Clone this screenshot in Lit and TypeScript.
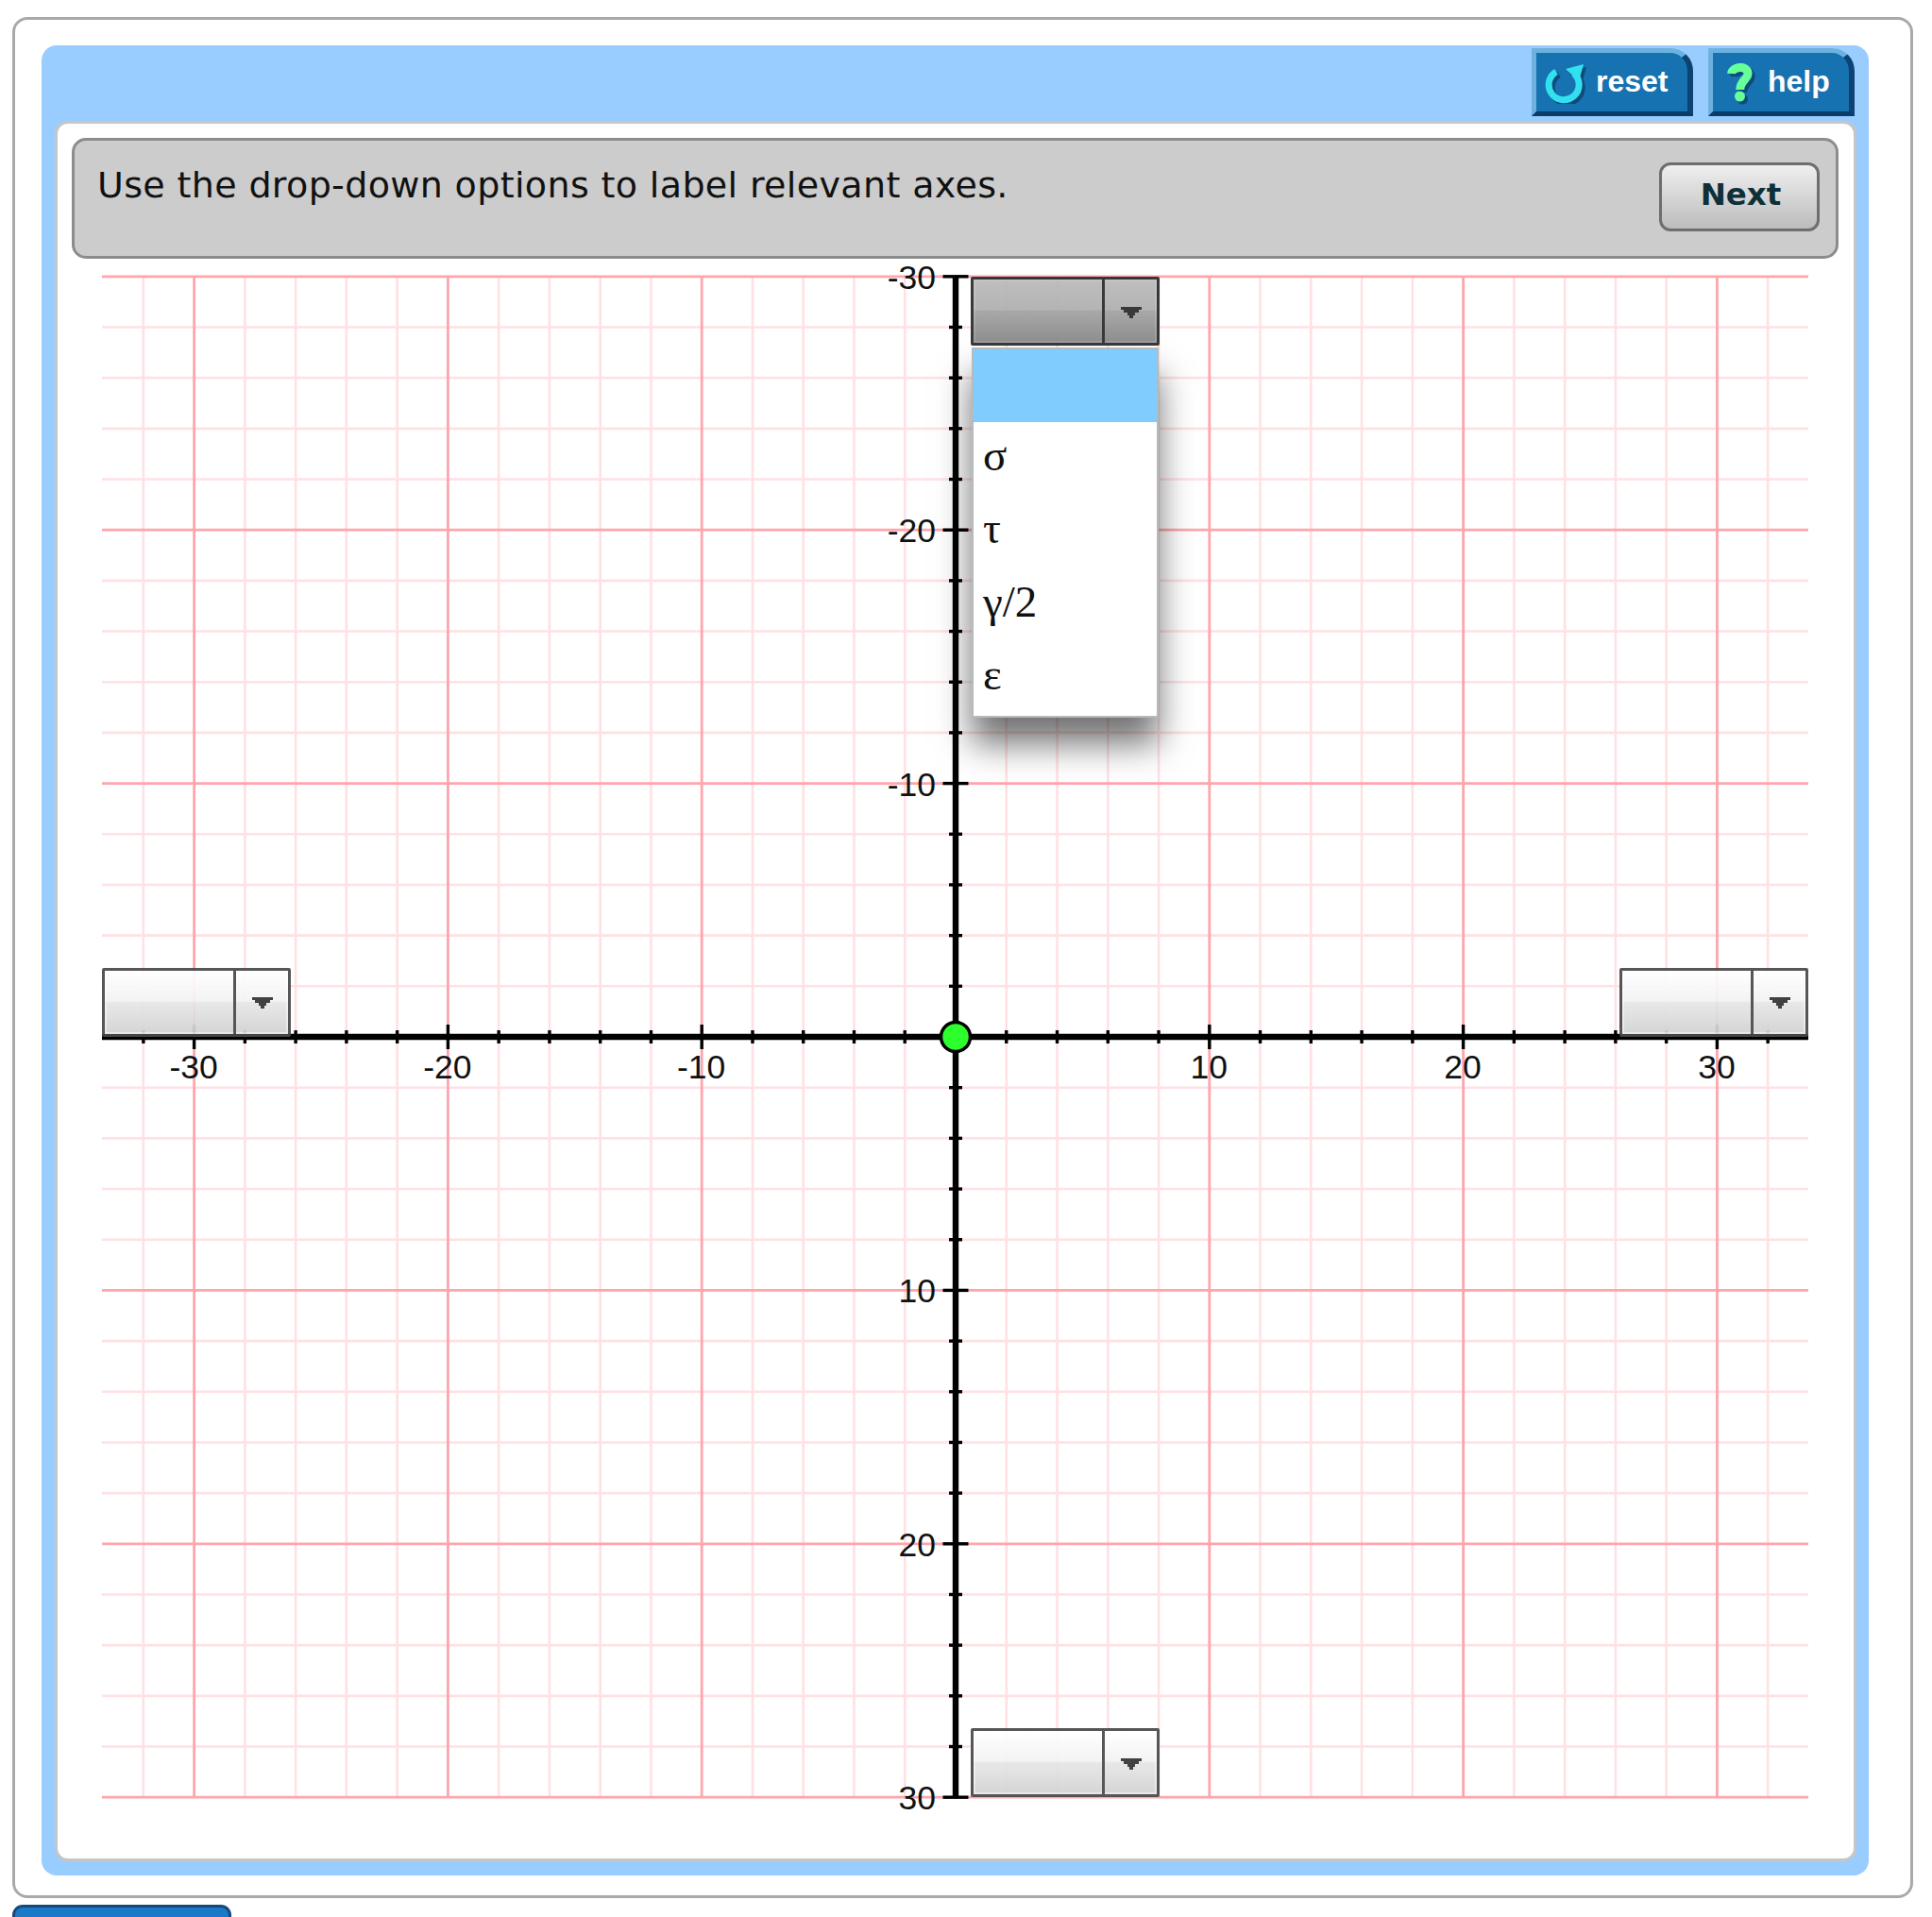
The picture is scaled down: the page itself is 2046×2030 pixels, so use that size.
import { LitElement, html, css, svg } from "lit";
import { customElement } from "lit/decorators.js";

const CX = 1012;
const CY = 1098;
const UX = 26.88;
const UY = 26.84;
const X0 = 108;
const X1 = 1915;
const Y0 = CY - 30 * UY;
const Y1 = CY + 30 * UY;
const OX = 76;
const OY = 274;

const range = (from: number, to: number, step: number) => {
  const out: number[] = [];
  for (let v = from; v <= to; v += step) out.push(v);
  return out;
};

const xs = (v: number) => CX + v * UX;
const ys = (v: number) => CY + v * UY;

type Drop = { x: number; y: number; active?: boolean };
const drops: Drop[] = [
  { x: 108, y: 1024.5 },
  { x: 1715, y: 1024.5 },
  { x: 1028, y: 293, active: true },
  { x: 1028, y: 1830 },
];

const options = ["", "σ", "τ", "γ/2", "ε"];

@customElement("app-root")
export class AppRoot extends LitElement {
  static styles = css`
    :host {
      display: block;
      height: 2030px;
      overflow: hidden;
      padding-top: 18px;
      box-sizing: border-box;
      font-family: "Liberation Sans", Arial, sans-serif;
      background: #fff;
    }
    .frame {
      box-sizing: border-box;
      width: 2013px;
      height: 1991.5px;
      margin-left: 13px;
      border: 3px solid #a9a9a9;
      border-radius: 16px;
      padding: 27px 44px 19px 28px;
      background: #fff;
    }
    .panel {
      background: #99ccff;
      border-radius: 16px;
      padding: 0 13px 15px 14px;
    }
    .toolbar {
      box-sizing: border-box;
      height: 80px;
      padding: 3px 2px 0 0;
      display: flex;
      justify-content: flex-end;
      align-items: flex-start;
      gap: 16px;
    }
    .tool {
      box-sizing: border-box;
      height: 72px;
      display: flex;
      align-items: center;
      background: #1772b1;
      border-style: solid;
      border-width: 5px 6px 5px 5px;
      border-color: #6db2df #0d4272 #0c3c69 #6db2df;
      border-radius: 0 24px 0 0;
      color: #fff;
      font-weight: 700;
      font-size: 32px;
    }
    .tool span {
      margin-top: -2px;
    }
    .tool svg {
      display: block;
      flex: none;
    }
    .reset {
      width: 171px;
      padding-left: 9px;
      gap: 8px;
    }
    .help {
      width: 155px;
      padding-left: 12px;
      gap: 6px;
    }
    .card {
      background: #fff;
      border: 3px solid #c6c6c6;
      border-radius: 14px;
      padding: 14.5px 16px 44px 15px;
    }
    .prompt {
      box-sizing: border-box;
      height: 128.5px;
      background: #cccccc;
      border: 3px solid #8c8c8c;
      border-radius: 15px;
      display: flex;
      justify-content: space-between;
      align-items: flex-start;
      padding: 23px 17px 0 24px;
    }
    .prompt-text {
      font-family: "DejaVu Sans", Verdana, sans-serif;
      font-size: 38px;
      letter-spacing: 0.36px;
      line-height: 44px;
      color: #111;
      margin-top: 2px;
    }
    .next {
      box-sizing: border-box;
      width: 170px;
      height: 73px;
      display: flex;
      align-items: center;
      justify-content: center;
      padding: 0 0 4px 3px;
      border: 3px solid #6e6e6e;
      border-radius: 12px;
      background: linear-gradient(#efefef, #bcbcbc);
      font-family: "DejaVu Sans", Verdana, sans-serif;
      font-weight: 700;
      font-size: 32.5px;
      color: #0e3038;
    }
    .plot {
      position: relative;
      width: 1871px;
      height: 1650px;
    }
    .plot > svg {
      display: block;
    }
    .axis-label {
      font-family: "Liberation Sans", Arial, sans-serif;
      font-size: 35.5px;
      fill: #111;
    }
    .dd {
      position: absolute;
      box-sizing: border-box;
      width: 200px;
      height: 73px;
      display: flex;
      border: 3px solid #4a4a4a;
      border-radius: 2px;
      opacity: 0.93;
      background: linear-gradient(#ffffff 0%, #f3f3f3 48%, #e7e7e7 50%, #d2d2d2 100%);
      box-shadow: inset 0 0 0 2px rgba(255, 255, 255, 0.45);
    }
    .dd.active {
      background: linear-gradient(#bcbcbc 0%, #b2b2b2 48%, #a6a6a6 50%, #8a8a8a 100%);
      border-color: #333;
      box-shadow: inset 0 0 0 2px rgba(255, 255, 255, 0.12);
      z-index: 2;
      opacity: 0.97;
    }
    .dd-field {
      flex: 1;
      border-right: 3px solid #4a4a4a;
    }
    .dd.active .dd-field {
      border-right-color: #333;
    }
    .dd-arrow {
      width: 55px;
      flex: none;
      display: flex;
      align-items: center;
      justify-content: center;
      padding-top: 2px;
      box-sizing: border-box;
    }
    .menu {
      position: absolute;
      left: 953px;
      top: 93.5px;
      box-sizing: border-box;
      width: 198px;
      height: 392.5px;
      background: #fff;
      border: 2.5px solid #b4babd;
      box-shadow: 0 28px 34px rgba(0, 0, 0, 0.55);
      z-index: 1;
    }
    .opt {
      box-sizing: border-box;
      height: 77.4px;
      padding: 0 0 7px 10px;
      display: flex;
      align-items: center;
      font-family: "Liberation Serif", "Times New Roman", serif;
      font-size: 47px;
      color: #111;
    }
    .opt.sel {
      background: #80ccff;
    }
    .tab {
      box-sizing: border-box;
      width: 232px;
      height: 15px;
      margin: 7px 0 0 13px;
      background: #1b7ac7;
      border: 3px solid #15487d;
      border-bottom: none;
      border-radius: 11px 11px 0 0;
    }
  `;

  private grid() {
    const minorX = range(-32, 32, 2).filter((v) => v % 10 !== 0);
    const minorY = range(-30, 30, 2).filter((v) => v % 10 !== 0);
    const majors = range(-30, 30, 10);
    return svg`
      <g stroke="#ffe1e3" stroke-width="2.6">
        ${minorX.map((v) => svg`<line x1=${xs(v)} x2=${xs(v)} y1=${Y0} y2=${Y1} />`)}
        ${minorY.map((v) => svg`<line x1=${X0} x2=${X1} y1=${ys(v)} y2=${ys(v)} />`)}
      </g>
      <g stroke="#ffa5ac" stroke-width="2.8">
        ${majors.map((v) => svg`<line x1=${xs(v)} x2=${xs(v)} y1=${Y0} y2=${Y1} />`)}
        ${majors.map((v) => svg`<line x1=${X0} x2=${X1} y1=${ys(v)} y2=${ys(v)} />`)}
      </g>`;
  }

  private axes() {
    const tx = range(-32, 32, 2).filter((v) => v !== 0);
    const ty = range(-30, 30, 2).filter((v) => v !== 0);
    const labels = range(-30, 30, 10).filter((v) => v !== 0);
    return svg`
      <g stroke="#000" stroke-width="3.4">
        ${tx.map((v) => {
          const m = v % 10 === 0;
          return svg`<line x1=${xs(v)} x2=${xs(v)} y1=${CY - (m ? 13 : 7)} y2=${CY + (m ? 13 : 7)} />`;
        })}
        ${ty.map((v) => {
          const m = v % 10 === 0;
          return svg`<line y1=${ys(v)} y2=${ys(v)} x1=${CX - (m ? 13.5 : 7)} x2=${CX + (m ? 13.5 : 7)} />`;
        })}
      </g>
      <line x1=${X0} x2=${X1} y1=${CY} y2=${CY} stroke="#000" stroke-width="6.4" />
      <line x1=${CX} x2=${CX} y1=${Y0} y2=${Y1} stroke="#000" stroke-width="6.4" />
      <circle cx=${CX} cy=${CY} r="15.5" fill="#2dff2d" stroke="#000" stroke-width="3.5" />
      ${labels.map(
        (v) => svg`<text class="axis-label" x=${xs(v) - 0.5} y="1142" text-anchor="middle">${v}</text>`
      )}
      ${labels.map(
        (v) => svg`<text class="axis-label" x="991" y=${ys(v) + 13} text-anchor="end">${v}</text>`
      )}`;
  }

  private arrow() {
    return html`<svg width="24" height="14" viewBox="0 0 24 14">
      <path
        d="M1 1H23V4H20V7H16V10H14V13H10V10H8V7H4V4H1Z"
        fill="#333"
      />
    </svg>`;
  }

  render() {
    return html`
      <div class="frame">
        <div class="panel">
          <div class="toolbar">
            <div class="tool reset">
              <svg width="46" height="46" viewBox="0 0 46 46">
                <g fill="none" stroke="#0e4a7a" stroke-width="7" transform="translate(3 3)">
                  <path d="M12 12A16 16 0 1 0 31 14" />
                </g>
                <polygon points="25,12 44,7 39,25" fill="#0e4a7a" />
                <path d="M12 12A16 16 0 1 0 31 14" fill="none" stroke="#33e0f0" stroke-width="7" />
                <polygon points="22,9 41,4 36,22" fill="#33e0f0" />
              </svg>
              <span>reset</span>
            </div>
            <div class="tool help">
              <svg width="40" height="50" viewBox="0 0 40 50">
                <g transform="translate(3 3)">
                  <path d="M7.5 16C8 9 23.5 6 25 15C26 22 17 22 16.7 33" fill="none" stroke="#0e4a7a" stroke-width="9" />
                  <circle cx="16.5" cy="40" r="5.5" fill="#0e4a7a" />
                </g>
                <path d="M7.5 16C8 9 23.5 6 25 15C26 22 17 22 16.7 33" fill="none" stroke="#66ff99" stroke-width="9" />
                <circle cx="16.5" cy="40" r="5.5" fill="#66ff99" />
              </svg>
              <span>help</span>
            </div>
          </div>
          <div class="card">
            <div class="prompt">
              <div class="prompt-text">Use the drop-down options to label relevant axes.</div>
              <div class="next">Next</div>
            </div>
            <div class="plot">
              <svg width="1871" height="1650" viewBox="${OX} ${OY} 1871 1650">
                ${this.grid()} ${this.axes()}
              </svg>
              <div class="menu">
                ${options.map(
                  (o, i) => html`<div class="opt ${i === 0 ? "sel" : ""}">${o}</div>`
                )}
              </div>
              ${drops.map(
                (d) => html`<div
                  class="dd ${d.active ? "active" : ""}"
                  style="left:${d.x - OX}px;top:${d.y - OY}px"
                >
                  <div class="dd-field"></div>
                  <div class="dd-arrow">${this.arrow()}</div>
                </div>`
              )}
            </div>
          </div>
        </div>
      </div>
      <div class="tab"></div>
    `;
  }
}
